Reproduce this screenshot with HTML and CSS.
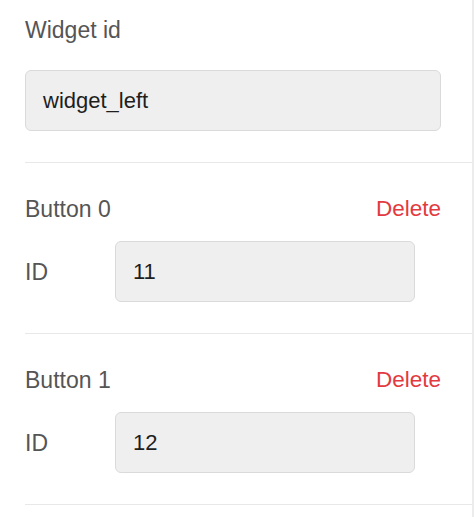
FILE: index.html
```html
<!DOCTYPE html>
<html>
<head>
<meta charset="utf-8">
<link rel="stylesheet" href="styles.css">
</head>
<body>
<div class="panel">
  <section class="section">
    <div class="label">Widget id</div>
    <div class="field field-wide">widget_left</div>
  </section>
  <section class="section button-section">
    <div class="header">
      <span class="label">Button 0</span>
      <span class="delete">Delete</span>
    </div>
    <div class="row">
      <span class="label row-label">ID</span>
      <div class="field field-id">11</div>
    </div>
  </section>
  <section class="section button-section">
    <div class="header">
      <span class="label">Button 1</span>
      <span class="delete">Delete</span>
    </div>
    <div class="row">
      <span class="label row-label">ID</span>
      <div class="field field-id">12</div>
    </div>
  </section>
</div>
</body>
</html>
```
FILE: styles.css
```css
html, body {
  margin: 0;
  padding: 0;
  background: #ffffff;
}
body {
  font-family: "Liberation Sans", Arial, sans-serif;
  font-size: 22px;
}
.panel {
  width: 472px;
  min-height: 517px;
  border-right: 2px solid #ececec;
  box-sizing: content-box;
}
.section {
  margin-left: 25px;
  padding: 17px 31px 31px 0;
  border-bottom: 1px solid #e8e8e8;
}
.button-section {
  padding-top: 33px;
}
.label {
  color: #555555;
  font-size: 23px;
  line-height: 26px;
}
.field {
  box-sizing: border-box;
  height: 61px;
  border: 1px solid #dadada;
  border-radius: 6px;
  background: #efefef;
  color: #1e1e1e;
  display: flex;
  align-items: center;
  padding-left: 17px;
}
.field-wide {
  margin-top: 27px;
}
.header {
  display: flex;
  justify-content: space-between;
  align-items: center;
  height: 26px;
}
.delete {
  color: #e23a40;
  font-size: 22.5px;
  line-height: 26px;
}
.row {
  margin-top: 19px;
  display: flex;
  align-items: center;
}
.row-label {
  width: 90px;
}
.field-id {
  width: 300px;
}
```
